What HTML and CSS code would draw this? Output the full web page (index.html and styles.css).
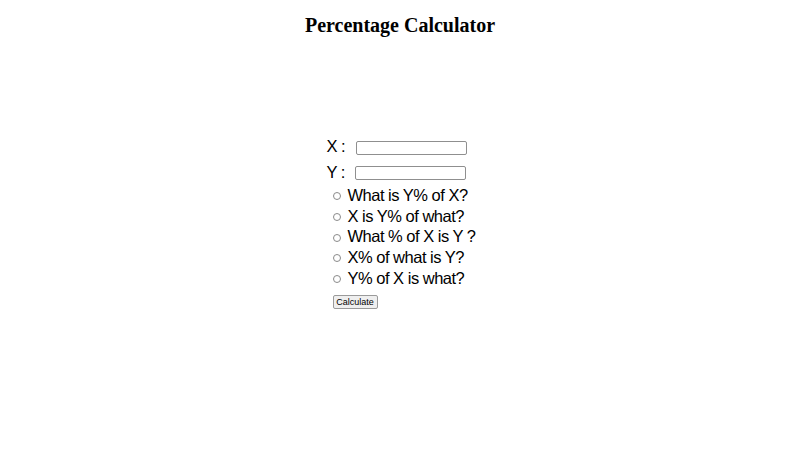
FILE: index.html
```html
<!DOCTYPE html>
<html>
<head>
<meta charset="utf-8">
<link rel="stylesheet" href="styles.css">
</head>
<body>
<h2 class="title">Percentage Calculator</h2>
<div class="wrap">
  <form class="calc">
    <div class="field"><label class="lbl">X :</label><input class="inp" type="text"></div>
    <div class="field field-y"><label class="lbl">Y :</label><input class="inp" type="text"></div>
    <div class="opts">
      <label class="opt"><input class="rad" type="radio" name="m"><span>What is Y% of X?</span></label>
      <label class="opt"><input class="rad" type="radio" name="m"><span>X is Y% of what?</span></label>
      <label class="opt"><input class="rad" type="radio" name="m"><span>What % of X is Y ?</span></label>
      <label class="opt"><input class="rad" type="radio" name="m"><span>X% of what is Y?</span></label>
      <label class="opt"><input class="rad" type="radio" name="m"><span>Y% of X is what?</span></label>
    </div>
    <button class="btn" type="button">Calculate</button>
  </form>
</div>
</body>
</html>
```
FILE: styles.css
```css
html, body { margin: 0; padding: 0; background: #fff; }
body { width: 800px; height: 450px; overflow: hidden; color: #000; }
.title {
  font-family: "Liberation Serif", "Times New Roman", serif;
  font-weight: bold;
  font-size: 20px;
  text-align: center;
  margin: 12px 0 0 0;
  line-height: 26px;
}
.wrap { display: flex; justify-content: center; padding-top: 97px; padding-left: 2px; }
.calc { display: flex; flex-direction: column; align-items: flex-start; font-family: "Liberation Sans", Arial, sans-serif; font-size: 16.5px; letter-spacing: -0.5px; white-space: nowrap; }
.field { display: flex; align-items: center; height: 22px; }
.field-y { margin-top: 4px; }
.lbl { width: 29px; line-height: 22px; }
.inp {
  width: 111px; height: 14px; box-sizing: border-box;
  border: 1px solid #8f8f8f; border-radius: 2px; padding: 0; margin: 3px 0 0 0;
  font-size: 8px;
}
.field-y .inp { margin-left: -1px; margin-top: 2px; }
.opts { display: flex; flex-direction: column; margin-top: 2px; padding-left: 6px; }
.opt { display: flex; align-items: center; height: 20.7px; }
.rad {
  appearance: none; -webkit-appearance: none; flex: none;
  width: 8px; height: 8px; border: 1px solid #8a8a8a; border-radius: 50%;
  margin: 2px 7px 0 0; box-sizing: border-box; background: #fff;
}
.btn {
  margin: 7px 0 0 6px; font-family: "Liberation Sans", Arial, sans-serif; font-size: 9px; letter-spacing: 0;
  height: 14px; width: 45px; padding: 0; border: 1px solid #9a9a9a; border-radius: 2px;
  background: #efefef; color: #000; line-height: 12px;
}
```
